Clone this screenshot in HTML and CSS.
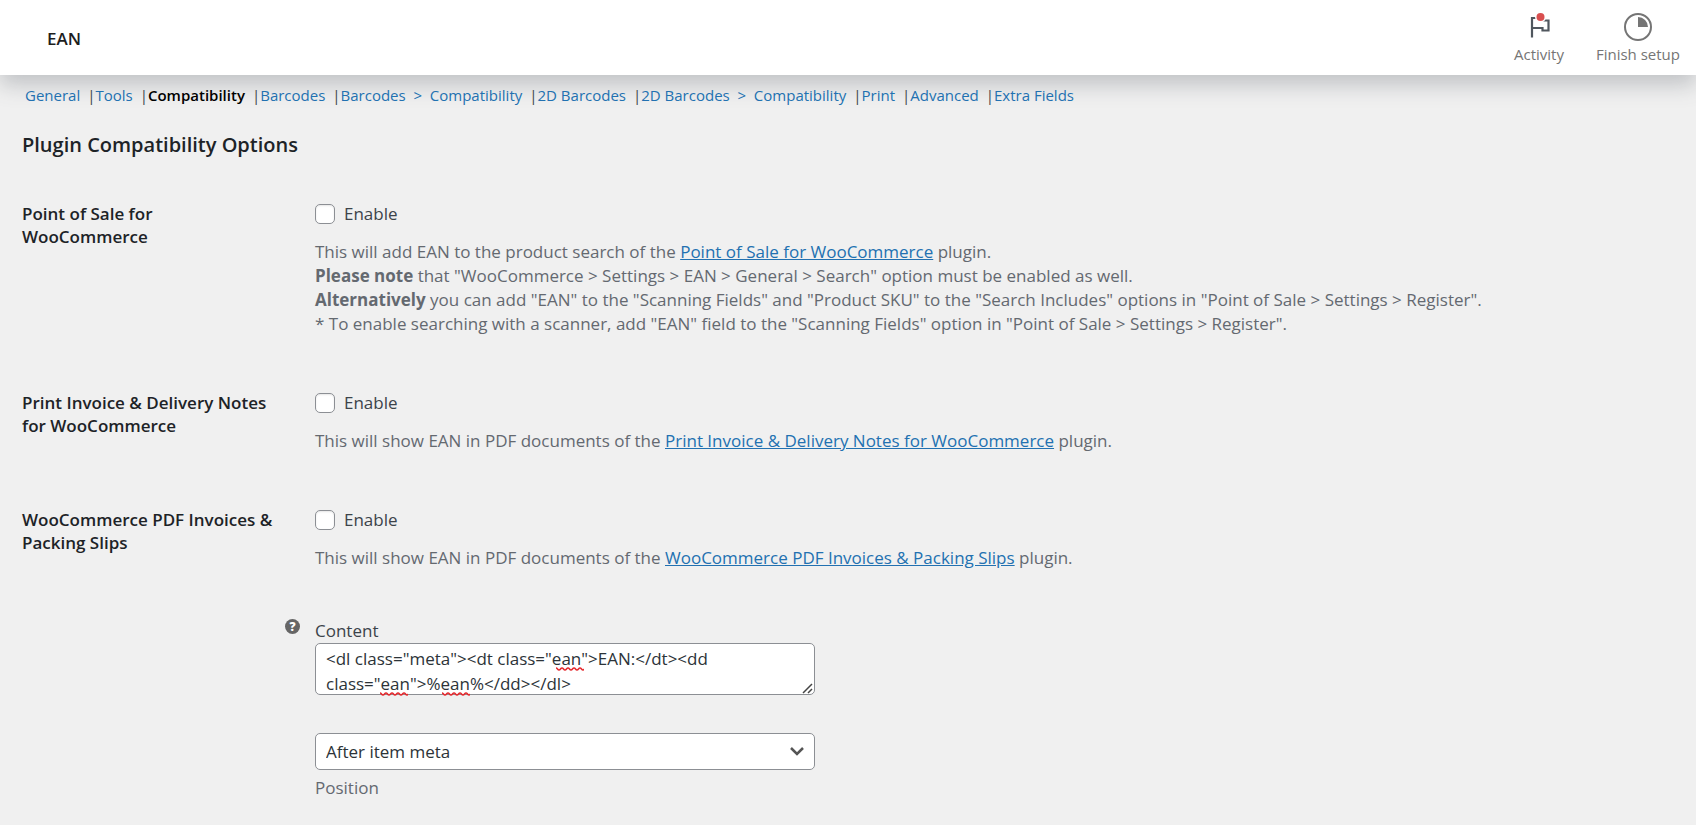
FILE: index.html
```html
<!DOCTYPE html>
<html lang="en">

<head>
    <meta charset="UTF-8">
    <meta name="viewport" content="width=device-width, initial-scale=1.0">
    <title>EAN settings</title>
    <link rel="stylesheet" href="styles.css">
</head>

<body>
    <header class="header">
        <h1>EAN</h1>
        <div class="panel-tabs">
            <button type="button" class="panel-tab">
                <svg width="28" height="28" viewBox="0 0 28 28" aria-hidden="true">
                    <path d="M7 24.500V5H16V7.500H23.500V17.500H17.500V15H7" fill="none" stroke="#50575e" stroke-width="2.200" />
                    <circle cx="15.500" cy="4" r="5.500" fill="#fff" />
                    <circle cx="15.500" cy="4" r="4" fill="#d94f4f" />
                </svg>
                Activity
            </button>
            <button type="button" class="panel-tab">
                <svg width="28" height="28" viewBox="0 0 28 28" aria-hidden="true">
                    <circle cx="14" cy="14" r="13" fill="none" stroke="#757575" stroke-width="2" />
                    <path d="M14 14V4a10 10 0 0 1 10 10z" fill="#757575" />
                </svg>
                Finish setup
            </button>
        </div>
    </header>

    <main class="main">
        <ul class="subsub">
            <li><a href="#">General</a></li>
            <li><a href="#">Tools</a></li>
            <li><a href="#" class="current">Compatibility</a></li>
            <li><a href="#">Barcodes</a></li>
            <li><a href="#">Barcodes&nbsp; &gt;&nbsp; Compatibility</a></li>
            <li><a href="#">2D Barcodes</a></li>
            <li><a href="#">2D Barcodes&nbsp; &gt;&nbsp; Compatibility</a></li>
            <li><a href="#">Print</a></li>
            <li><a href="#">Advanced</a></li>
            <li><a href="#">Extra Fields</a></li>
        </ul>

        <h2>Plugin Compatibility Options</h2>

        <form class="options">
            <div class="row">
                <h3>Point of Sale for WooCommerce</h3>
                <div class="field">
                    <label class="check"><input type="checkbox" name="pos">Enable</label>
                    <p>This will add EAN to the product search of the <a href="#">Point of Sale for WooCommerce</a> plugin.<br>
                        <strong>Please note</strong> that "WooCommerce &gt; Settings &gt; EAN &gt; General &gt; Search" option must be enabled as well.<br>
                        <strong>Alternatively</strong> you can add "EAN" to the "Scanning Fields" and "Product SKU" to the "Search Includes" options in "Point of Sale &gt; Settings &gt; Register".<br>
                        * To enable searching with a scanner, add "EAN" field to the "Scanning Fields" option in "Point of Sale &gt; Settings &gt; Register".</p>
                </div>
            </div>

            <div class="row">
                <h3>Print Invoice &amp; Delivery Notes for WooCommerce</h3>
                <div class="field">
                    <label class="check"><input type="checkbox" name="invoice">Enable</label>
                    <p>This will show EAN in PDF documents of the <a href="#">Print Invoice &amp; Delivery Notes for WooCommerce</a> plugin.</p>
                </div>
            </div>

            <div class="row">
                <h3>WooCommerce PDF Invoices &amp; Packing Slips</h3>
                <div class="field">
                    <label class="check"><input type="checkbox" name="pdf">Enable</label>
                    <p>This will show EAN in PDF documents of the <a href="#">WooCommerce PDF Invoices &amp; Packing Slips</a> plugin.</p>
                </div>
            </div>

            <div class="row">
                <span class="help">?</span>
                <div class="field">
                    <label for="content">Content</label>
                    <div class="editor">
                        <textarea id="content" name="content" rows="2" spellcheck="false">&lt;dl class="meta"&gt;&lt;dt class="ean"&gt;EAN:&lt;/dt&gt;&lt;dd class="ean"&gt;%ean%&lt;/dd&gt;&lt;/dl&gt;</textarea>
                        <span class="typo typo-1"></span>
                        <span class="typo typo-2"></span>
                        <span class="typo typo-3"></span>
                    </div>
                    <select id="position" name="position">
                        <option>After item meta</option>
                        <option>Before item meta</option>
                    </select>
                    <label for="position" class="hint">Position</label>
                </div>
            </div>
        </form>
    </main>
</body>

</html>
```
FILE: styles.css
```css
* {
    box-sizing: border-box;
}

body {
    margin: 0;
    background-color: #f0f0f0;
    color: #3c434a;
    font-family: "Open Sans", sans-serif;
    font-size: 17px;
    line-height: 24px;
}

h1,
h2,
h3,
p {
    margin: 0;
}

a {
    color: #2271b1;
}

.header {
    display: flex;
    justify-content: space-between;
    align-items: center;
    height: 75px;
    padding: 2px 8px 0 47px;
    background-color: white;
    box-shadow: 0 10px 20px rgba(85, 93, 102, 0.3);
}

h1 {
    color: #1e1e1e;
    font-size: 17px;
    font-weight: 600;
}

.panel-tabs {
    display: flex;
    gap: 16px;
}

.panel-tab {
    display: flex;
    flex-direction: column;
    align-items: center;
    padding: 2px 8px 0;
    border: none;
    background: none;
    color: #757575;
    font-family: inherit;
    font-size: 15px;
    line-height: 26px;
    cursor: pointer;
}

.main {
    padding: 8px 22px 0;
}

.subsub {
    display: flex;
    flex-wrap: wrap;
    margin: 0;
    padding: 0 3px;
    list-style: none;
    font-size: 15px;
}

.subsub li:not(:last-child)::after {
    content: "|";
    margin-left: 7px;
    color: #3c434a;
}

.subsub a {
    text-decoration: none;
}

.subsub .current {
    color: black;
    font-weight: 600;
}

h2 {
    padding-top: 24px;
    color: #1d2327;
    font-size: 20px;
    font-weight: 600;
    line-height: 28px;
}

.options {
    padding-top: 43px;
}

.row {
    display: grid;
    grid-template-columns: 263px 30px 1fr;
    margin-bottom: 55px;
}

.row:nth-last-child(2) {
    margin-bottom: 49px;
}

.row:last-child {
    margin-bottom: 0;
}

h3 {
    padding-right: 8px;
    color: #1d2327;
    font-size: 17px;
    font-weight: 600;
    line-height: 23px;
}

.field {
    display: flex;
    flex-direction: column;
    align-items: flex-start;
    grid-column: 3;
}

.check {
    display: flex;
    align-items: center;
    gap: 9px;
    margin-bottom: 14px;
}

.check input {
    appearance: none;
    width: 20px;
    height: 20px;
    margin: 0;
    border: 1px solid #8c8f94;
    border-radius: 5px;
    background-color: white;
    box-shadow: inset 0 1px 2px rgba(0, 0, 0, 0.1);
}

.check input:checked {
    background-color: #2271b1;
}

.field p {
    color: #646970;
}

.help {
    grid-column: 2;
    width: 15px;
    height: 15px;
    border-radius: 50%;
    background-color: #666;
    color: white;
    font-size: 12px;
    font-weight: 800;
    line-height: 15px;
    text-align: center;
}

.editor {
    position: relative;
    display: flex;
    width: 500px;
    max-width: 100%;
    margin-bottom: 38px;
}

textarea,
select {
    width: 100%;
    border: 1px solid #8c8f94;
    border-radius: 5px;
    background-color: white;
    color: #2c3338;
    font-family: inherit;
    font-size: 17px;
}

textarea {
    height: 52px;
    padding: 2px 10px;
    line-height: 25px;
    overflow: hidden;
    resize: both;
}

textarea::-webkit-resizer {
    background: url("data:image/svg+xml,%3Csvg xmlns='http://www.w3.org/2000/svg' width='12' height='12'%3E%3Cpath d='M1 11L10 2M6 11L10 7' fill='none' stroke='%23444' stroke-width='1.500'/%3E%3C/svg%3E") no-repeat right bottom;
}

/* spelling marks under the words in the editor */
.typo {
    position: absolute;
    width: 28px;
    height: 4px;
    background: url("data:image/svg+xml,%3Csvg xmlns='http://www.w3.org/2000/svg' width='6' height='4'%3E%3Cpath d='M-1 2Q0 0 1.500 2T4.500 2T7.500 2' fill='none' stroke='%23e5282d' stroke-width='1.500'/%3E%3C/svg%3E") repeat-x;
    pointer-events: none;
}

.typo-1 {
    left: 241px;
    top: 24px;
}

.typo-2 {
    left: 65px;
    top: 49px;
}

.typo-3 {
    left: 127px;
    top: 49px;
}

select {
    appearance: none;
    max-width: 500px;
    height: 37px;
    margin-bottom: 6px;
    padding: 0 30px 0 10px;
    background: white url("data:image/svg+xml,%3Csvg xmlns='http://www.w3.org/2000/svg' width='14' height='9'%3E%3Cpath d='M1 1l6 6 6-6' fill='none' stroke='%23555' stroke-width='2.500'/%3E%3C/svg%3E") no-repeat right 10px center;
}

.hint {
    color: #646970;
}
```
